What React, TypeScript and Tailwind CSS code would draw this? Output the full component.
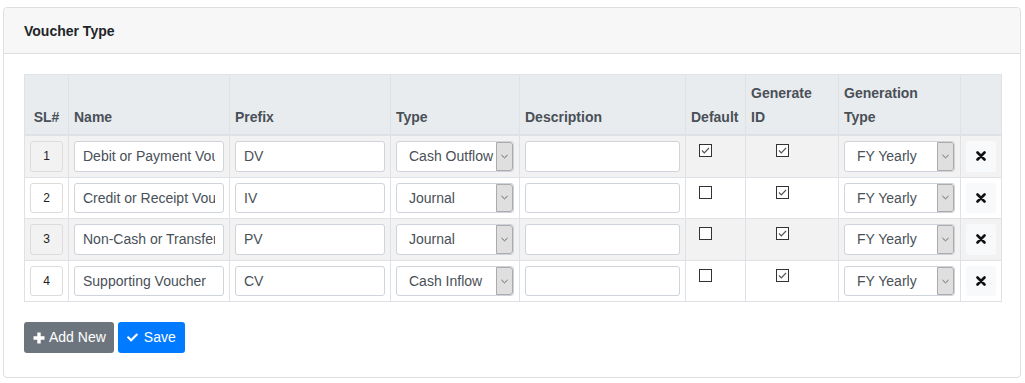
import React from "react";
import { FaCheck } from "react-icons/fa";

type Row = {
  sl: number;
  name: string;
  prefix: string;
  type: string;
  isDefault: boolean;
  generateId: boolean;
};

const rows: Row[] = [
  { sl: 1, name: "Debit or Payment Voucher", prefix: "DV", type: "Cash Outflow", isDefault: true, generateId: true },
  { sl: 2, name: "Credit or Receipt Voucher", prefix: "IV", type: "Journal", isDefault: false, generateId: true },
  { sl: 3, name: "Non-Cash or Transfer Voucher", prefix: "PV", type: "Journal", isDefault: false, generateId: true },
  { sl: 4, name: "Supporting Voucher", prefix: "CV", type: "Cash Inflow", isDefault: false, generateId: true },
];

function Checkbox({ checked }: { checked: boolean }) {
  return (
    <span className="block w-[13px] h-[13px] border border-[#333] bg-white">
      {checked && (
        <svg viewBox="0 0 11 11" className="w-[11px] h-[11px]">
          <path d="M2 5.5 L4.3 7.8 L9 3" fill="none" stroke="#555" strokeWidth="1.2" />
        </svg>
      )}
    </span>
  );
}

function FakeSelect({ value }: { value: string }) {
  return (
    <div className="relative h-[30.6px] w-full rounded-[3px] border border-[#ced4da] bg-white text-[14px] leading-[28px] text-[#495057] overflow-hidden">
      <span className="block whitespace-nowrap pl-[12px]">{value}</span>
      <span className="absolute right-0 top-0 bottom-0 w-[17px] flex items-center justify-center bg-[#dfdfdf] border border-[#ababab] rounded-r-[3px]">
        <svg viewBox="0 0 8 5" className="w-[7px] h-[5px]">
          <path d="M0.5 0.8 L4 4 L7.5 0.8" fill="none" stroke="#555" strokeWidth="1" />
        </svg>
      </span>
    </div>
  );
}

const inputCls =
  "block w-full h-[30.6px] rounded-[3px] border border-[#ced4da] bg-white px-[8px] text-[14px] text-[#495057] outline-none [font-family:'Liberation_Sans',Arial,sans-serif]";

const th = "border border-b-2 border-[#dee2e6] px-[5px] pt-[6px] pb-[5px] align-bottom text-left";
const td = "border border-[#dee2e6] p-[5px] align-top";

export default function App() {
  return (
    <div className="pt-[7px] pl-[3px] pr-[4px] pb-[6px] [font-family:'Liberation_Sans',Arial,sans-serif]">
      <div className="rounded-[4px] border border-[#dfdfdf] bg-white">
        <div className="border-b border-[#dfdfdf] bg-[#f7f7f7] px-[20px] pt-[13px] pb-[11px] text-[14px] font-bold leading-[21px] text-[#212529] rounded-t-[4px]">
          Voucher Type
        </div>
        <div className="px-[20px] pt-[20px] pb-[24px]">
          <table className="w-[977px] table-fixed border-collapse border border-[#dee2e6] text-[14px] text-[#495057]">
            <colgroup>
              <col className="w-[44px]" />
              <col className="w-[161px]" />
              <col className="w-[161px]" />
              <col className="w-[129px]" />
              <col className="w-[166px]" />
              <col className="w-[60px]" />
              <col className="w-[93px]" />
              <col className="w-[122px]" />
              <col className="w-[41px]" />
            </colgroup>
            <thead>
              <tr className="bg-[#e9ecef] leading-[24px] font-bold">
                <th className={`${th} !text-center`}>SL#</th>
                <th className={th}>Name</th>
                <th className={th}>Prefix</th>
                <th className={th}>Type</th>
                <th className={th}>Description</th>
                <th className={th}>Default</th>
                <th className={th}>
                  Generate
                  <br />
                  ID
                </th>
                <th className={th}>
                  Generation
                  <br />
                  Type
                </th>
                <th className={th}></th>
              </tr>
            </thead>
            <tbody>
              {rows.map((r, i) => (
                <tr key={r.sl} className={i % 2 === 0 ? "bg-[#f2f2f2]" : "bg-white"}>
                  <td className={td}>
                    <input
                      readOnly
                      defaultValue={String(r.sl)}
                      className="block w-full h-[30.6px] rounded-[3px] border border-[#dcdcdc] bg-transparent text-center text-[12px] text-[#222] outline-none [font-family:'Liberation_Sans',Arial,sans-serif]"
                    />
                  </td>
                  <td className={td}>
                    <input defaultValue={r.name} className={inputCls} />
                  </td>
                  <td className={td}>
                    <input defaultValue={r.prefix} className={inputCls} />
                  </td>
                  <td className={td}>
                    <FakeSelect value={r.type} />
                  </td>
                  <td className={td}>
                    <input defaultValue="" className={inputCls} />
                  </td>
                  <td className={td}>
                    <div className="h-[30.6px] pl-[7.5px] pt-[3px]">
                      <Checkbox checked={r.isDefault} />
                    </div>
                  </td>
                  <td className={td}>
                    <div className="h-[30.6px] pl-[25px] pt-[3px]">
                      <Checkbox checked={r.generateId} />
                    </div>
                  </td>
                  <td className={td}>
                    <FakeSelect value="FY Yearly" />
                  </td>
                  <td className={td}>
                    <button className="flex h-[30.6px] w-full items-center justify-center rounded-[3px] bg-[#f8f9fa]">
                      <svg viewBox="0 0 10 10" className="w-[10px] h-[10px]">
                        <path d="M1.5 1.5 L8.5 8.5 M8.5 1.5 L1.5 8.5" stroke="#111" strokeWidth="2.6" strokeLinecap="round" />
                      </svg>
                    </button>
                  </td>
                </tr>
              ))}
            </tbody>
          </table>
          <div className="mt-[20px] flex gap-[4px]">
            <button className="flex h-[31px] items-center gap-[4px] rounded-[3px] bg-[#6c757d] pl-[9px] pr-[8px] text-[14px] text-white">
              <svg viewBox="0 0 12 12" className="w-[12px] h-[12px]">
                <path d="M6 0.5 V11.5 M0.5 6 H11.5" stroke="#fff" strokeWidth="3.4" />
              </svg>
              Add New
            </button>
            <button className="flex h-[31px] items-center gap-[6px] rounded-[3px] bg-[#007bff] px-[9px] text-[14px] text-white">
              <FaCheck className="w-[11px] h-[11px]" />
              Save
            </button>
          </div>
        </div>
      </div>
    </div>
  );
}
